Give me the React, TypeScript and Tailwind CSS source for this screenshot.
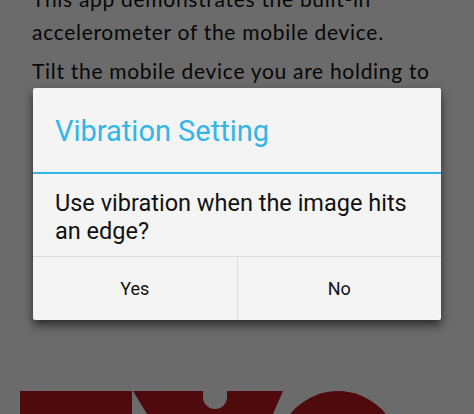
import React from "react";

const Logo = () => (
  <svg width="474" height="23" viewBox="0 0 474 23" className="block shrink-0">
    <rect x="20" y="0" width="112" height="30" fill="#bc1821" />
    <path
      d="M133 0 L203 0 L203 6 A12 12 0 0 0 227 6 L227 0 L283 0 L273 23 L147 23 Z"
      fill="#bc1821"
    />
    <circle cx="338" cy="61" r="61" fill="#bc1821" />
  </svg>
);

const App: React.FC = () => {
  return (
    <div className="relative h-[414px] w-[474px] overflow-hidden bg-white">
      {/* page behind the dialog */}
      <div className="flex h-full flex-col">
        <div
          className="-mt-[18px] px-8 text-[21px] text-[#111]"
          style={{ fontFamily: "Lato, 'Open Sans', sans-serif" }}
        >
          <p className="leading-[33px] tracking-[0.7px]">
            This app demonstrates the built-in
            <br />
            accelerometer of the mobile device.
          </p>
          <p className="mt-[6px] leading-[33px] tracking-[0.7px]">
            Tilt the mobile device you are holding to
            <br />
            move the image around the screen.
          </p>
        </div>
        <div className="mt-auto">
          <Logo />
        </div>
      </div>

      {/* dim overlay */}
      <div className="absolute inset-0 bg-black/[0.58]" />

      {/* dialog */}
      <div
        className="absolute left-[33px] top-[88px] flex h-[232px] w-[408px] flex-col rounded-[2px] bg-[#f4f4f4] shadow-[0_5px_10px_rgba(0,0,0,0.6)]"
        style={{ fontFamily: "Roboto, 'Liberation Sans', sans-serif" }}
      >
        <div className="flex h-[84px] items-center px-[22px] pt-[3px]">
          <h2 className="text-[29px] leading-none text-[#33b5e5]">
            Vibration Setting
          </h2>
        </div>
        <div className="h-[2px] bg-[#33b5e5]" />
        <div className="h-[82px] px-[22px] pt-[15px] text-[23.5px] leading-[28px] text-[#111]">
          Use vibration when the image hits
          <br />
          an edge?
        </div>
        <div className="flex flex-1 border-t border-[#dcdcdc]">
          <button className="flex-1 border-r border-[#dcdcdc] text-[18px] text-[#111]">
            Yes
          </button>
          <button className="flex-1 text-[18px] text-[#111]">No</button>
        </div>
      </div>
    </div>
  );
};

export default App;
